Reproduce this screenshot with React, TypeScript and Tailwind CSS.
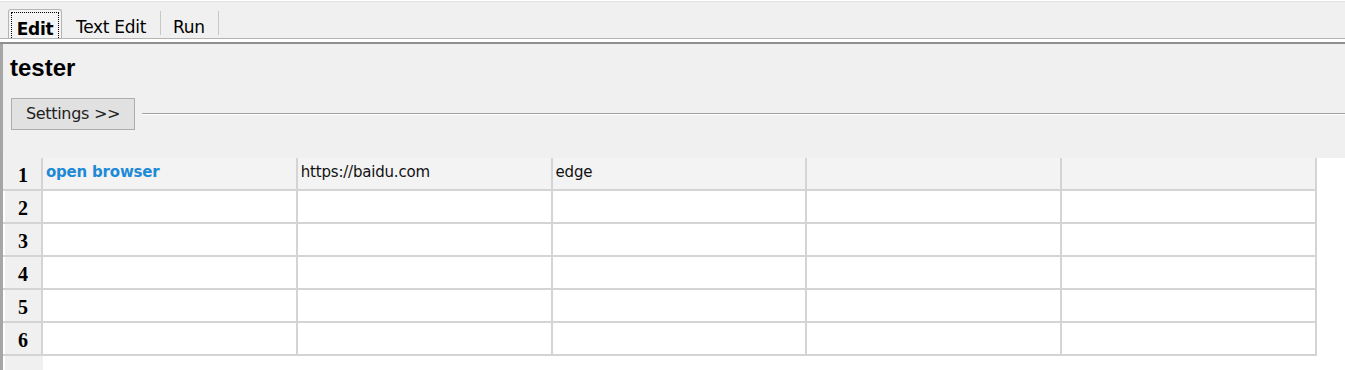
import React from 'react';

const rows = [
  ['open browser', 'https://baidu.com', 'edge', '', ''],
  ['', '', '', '', ''],
  ['', '', '', '', ''],
  ['', '', '', '', ''],
  ['', '', '', '', ''],
  ['', '', '', '', ''],
];

export default function App() {
  return (
    <div className="w-[1345px] h-[370px] bg-white overflow-hidden flex flex-col font-['Liberation_Sans',sans-serif] text-[#000]">
      {/* tab strip */}
      <div className="h-[1px] bg-white" />
      <div className="h-[37px] bg-[#f0f0f0] border-t border-[#e3e3e3] flex items-end pl-[8px] font-['DejaVu_Sans',sans-serif] text-[17px] tracking-[-0.3px]">
        <div className="h-[29px] w-[54px] border border-b-0 border-[#b5b5b5] rounded-t-[3px] bg-[#f4f4f4] p-[2px] pb-0">
          <div className="h-full border border-b-0 border-dotted border-black flex items-center justify-center pt-[8px] font-bold">
            Edit
          </div>
        </div>
        <div className="h-[29px] flex items-center pt-[8px] pl-[14px] pr-[14px]">Text Edit</div>
        <div className="w-px h-[24px] mb-[3px] bg-[#c8c8c8]" />
        <div className="h-[29px] flex items-center pt-[8px] pl-[12px] pr-[13px]">Run</div>
        <div className="w-px h-[24px] mb-[3px] bg-[#c8c8c8]" />
      </div>
      <div className="h-[1px] bg-[#b4b4b4]" />
      <div className="h-[3px] bg-white" />
      <div className="h-[2px] bg-[#8f8f8f]" />

      {/* panel */}
      <div className="flex-1 flex border-l-[3px] border-[#a6a6a6] bg-[#f0f0f0]">
        <div className="flex-1 flex flex-col">
          <div className="pl-[7px] pt-[10px] h-[48px] text-[24px] font-bold leading-[28px]">tester</div>
          <div className="flex items-center pl-[8px] h-[36px] mt-[4px]">
            <div className="w-[124px] h-[32px] bg-[#e1e1e1] border border-[#adadad] flex items-center justify-center text-[16px] text-[#222] font-['DejaVu_Sans',sans-serif] tracking-[-0.3px]">
              Settings &gt;&gt;
            </div>
            <div className="flex-1 ml-[7px] border-t border-[#a0a0a0] border-b border-b-white" />
          </div>
          <div className="h-[26px]" />

          {/* grid */}
          <div className="flex-1 flex bg-white">
            <div className="w-[1314px] flex flex-col">
              {rows.map((r, i) => (
                <div key={i} className={`flex h-[33px] border-b-2 border-[#d4d4d4] ${i === 0 ? 'bg-[#f3f3f3]' : 'bg-white'}`}>
                  <div className="w-[38px] ml-[2px] bg-[#f0f0f0] border-r-2 border-[#d4d4d4] flex items-center justify-center pt-[3px] text-[20px] font-bold font-['Liberation_Serif',serif]">
                    {i + 1}
                  </div>
                  {r.map((c, j) => (
                    <div
                      key={j}
                      className={`w-[255px] border-r-2 border-[#d4d4d4] pl-[3px] flex items-center text-[15px] pb-[3px] font-['DejaVu_Sans',sans-serif] tracking-[-0.2px] ${
                        j === 0 ? 'font-bold text-[#1e8ad6]' : 'text-[#111]'
                      }`}
                    >
                      {c}
                    </div>
                  ))}
                </div>
              ))}
              <div className="flex-1 flex">
                <div className="w-[38px] ml-[2px] bg-[#f0f0f0]" />
              </div>
            </div>
            <div className="flex-1 bg-white" />
          </div>
        </div>
      </div>
    </div>
  );
}
